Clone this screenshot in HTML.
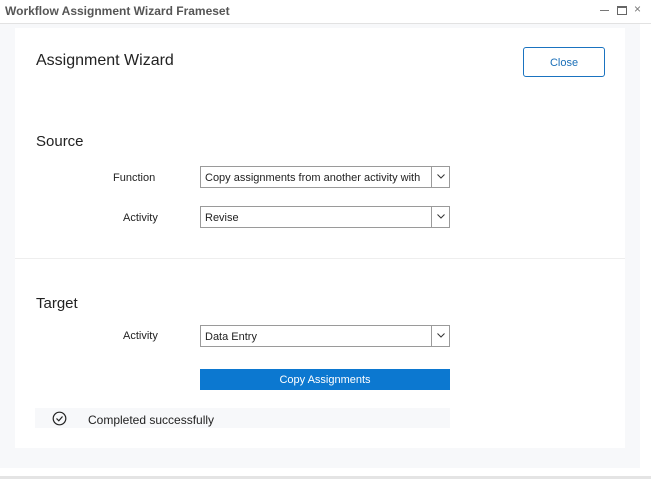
<!DOCTYPE html>
<html><head><style>
*{margin:0;padding:0;box-sizing:border-box}
body{width:651px;height:479px;background:#fff;font-family:"Liberation Sans",sans-serif;position:relative;overflow:hidden;color:#222}
.abs{position:absolute}
.title{left:5px;top:4px;font-size:12px;font-weight:bold;color:#555}
.lbl{font-size:11px;color:#222}
.sel{border:1px solid #9a9a9a;height:22px;background:#fff;font-size:11px;padding:5px 0 0 4px;white-space:nowrap;overflow:hidden}
.arr{position:absolute;right:0;top:0;width:18px;height:20px;border-left:1px solid #9a9a9a;background:#fff}
.arr svg{position:absolute;left:5px;top:7px}
</style></head><body>
<div class="abs title">Workflow Assignment Wizard Frameset</div>
<div class="abs" style="left:600px;top:10px;width:9px;height:1px;background:#777"></div>
<div class="abs" style="left:617px;top:6px;width:10px;height:9px;border:1px solid #666;border-top-width:2px"></div>
<div class="abs" style="left:634px;top:2px;font-size:12px;color:#777">×</div>
<div class="abs" style="left:0;top:23px;width:651px;height:1px;background:#e2e2e2"></div>
<div class="abs" style="left:0;top:24px;width:640px;height:444px;background:#f7f8fa"></div>
<div class="abs" style="left:15px;top:28px;width:610px;height:420px;background:#fff"></div>
<div class="abs" style="left:0;top:476px;width:651px;height:3px;background:#e4e4e4"></div>
<div class="abs" style="left:36px;top:52px;font-size:16px;color:#222">Assignment Wizard</div>
<div class="abs" style="left:523px;top:47px;width:82px;height:30px;border:1px solid #1a73c0;border-radius:3px;color:#1a6fb8;font-size:11px;text-align:center;line-height:30px">Close</div>
<div class="abs" style="left:36px;top:133px;font-size:15px">Source</div>
<div class="abs lbl" style="left:113px;top:172px">Function</div>
<div class="abs sel" style="left:200px;top:166px;width:250px">Copy assignments from another activity with<div class="arr"><svg width="8" height="5"><path d="M0.5 0.5L4 4L7.5 0.5" stroke="#333" fill="none"/></svg></div></div>
<div class="abs lbl" style="left:123px;top:212px">Activity</div>
<div class="abs sel" style="left:200px;top:206px;width:250px">Revise<div class="arr"><svg width="8" height="5"><path d="M0.5 0.5L4 4L7.5 0.5" stroke="#333" fill="none"/></svg></div></div>
<div class="abs" style="left:15px;top:258px;width:610px;height:1px;background:#eeeeee"></div>
<div class="abs" style="left:36px;top:295px;font-size:15px">Target</div>
<div class="abs lbl" style="left:123px;top:330px">Activity</div>
<div class="abs sel" style="left:200px;top:325px;width:250px">Data Entry<div class="arr"><svg width="8" height="5"><path d="M0.5 0.5L4 4L7.5 0.5" stroke="#333" fill="none"/></svg></div></div>
<div class="abs" style="left:200px;top:369px;width:250px;height:21px;background:#0c78d0;color:#fff;font-size:11px;text-align:center;line-height:22px">Copy Assignments</div>
<div class="abs" style="left:35px;top:408px;width:415px;height:20px;background:#f7f8fa"></div>
<svg class="abs" style="left:52px;top:411px" width="15" height="15"><circle cx="7.5" cy="7.5" r="6.3" stroke="#222" stroke-width="1.2" fill="none"/><path d="M4.5 7.5L6.8 9.8L10.5 5.5" stroke="#222" stroke-width="1.2" fill="none"/></svg>
<div class="abs" style="left:88px;top:413px;font-size:12px">Completed successfully</div>
</body></html>
